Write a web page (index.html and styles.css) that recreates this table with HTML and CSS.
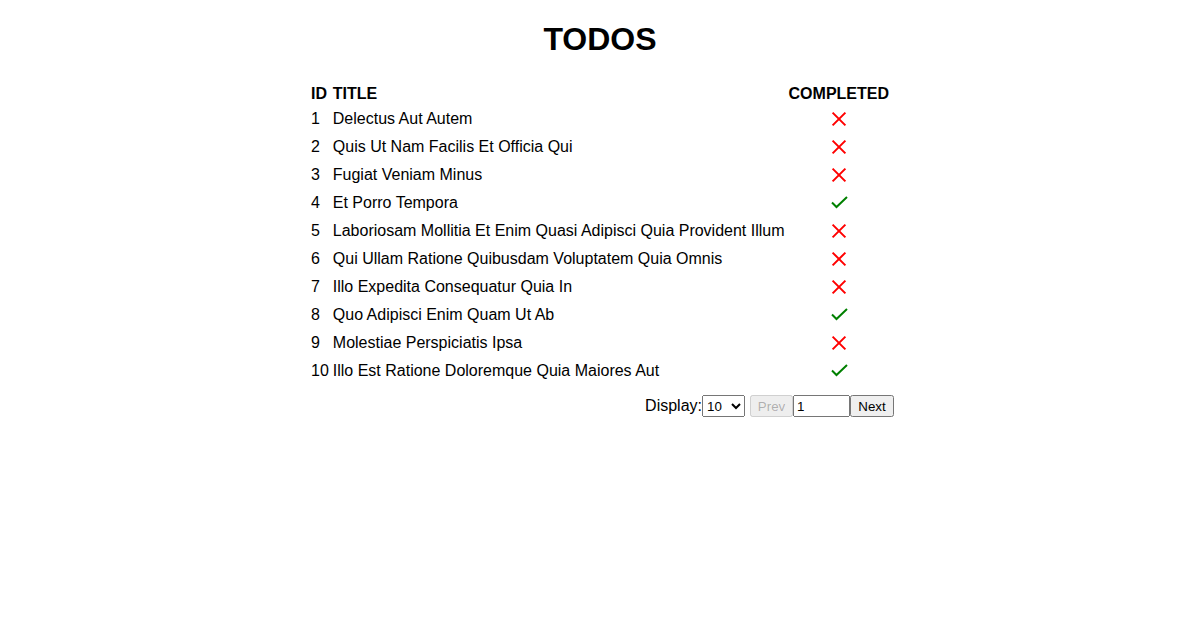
FILE: index.html
```html
<!DOCTYPE html>
<html>
<head>
<meta charset="utf-8">
<link rel="stylesheet" href="styles.css">
</head>
<body>
<div class="app">
  <h1 class="title">TODOS</h1>
  <div class="wrap">
    <table class="todos">
      <thead>
        <tr><th class="id">ID</th><th class="name">TITLE</th><th class="done">COMPLETED</th></tr>
      </thead>
      <tbody>
        <tr><td>1</td><td>Delectus Aut Autem</td><td class="done"><svg class="ic no" viewBox="0 0 24 24"><path d="M5.6 5.6L18.4 18.4M18.4 5.6L5.6 18.4"/></svg></td></tr>
        <tr><td>2</td><td>Quis Ut Nam Facilis Et Officia Qui</td><td class="done"><svg class="ic no" viewBox="0 0 24 24"><path d="M5.6 5.6L18.4 18.4M18.4 5.6L5.6 18.4"/></svg></td></tr>
        <tr><td>3</td><td>Fugiat Veniam Minus</td><td class="done"><svg class="ic no" viewBox="0 0 24 24"><path d="M5.6 5.6L18.4 18.4M18.4 5.6L5.6 18.4"/></svg></td></tr>
        <tr><td>4</td><td>Et Porro Tempora</td><td class="done"><svg class="ic yes" viewBox="0 0 24 24"><path d="M5 11.5L9.5 16L20 6"/></svg></td></tr>
        <tr><td>5</td><td>Laboriosam Mollitia Et Enim Quasi Adipisci Quia Provident Illum</td><td class="done"><svg class="ic no" viewBox="0 0 24 24"><path d="M5.6 5.6L18.4 18.4M18.4 5.6L5.6 18.4"/></svg></td></tr>
        <tr><td>6</td><td>Qui Ullam Ratione Quibusdam Voluptatem Quia Omnis</td><td class="done"><svg class="ic no" viewBox="0 0 24 24"><path d="M5.6 5.6L18.4 18.4M18.4 5.6L5.6 18.4"/></svg></td></tr>
        <tr><td>7</td><td>Illo Expedita Consequatur Quia In</td><td class="done"><svg class="ic no" viewBox="0 0 24 24"><path d="M5.6 5.6L18.4 18.4M18.4 5.6L5.6 18.4"/></svg></td></tr>
        <tr><td>8</td><td>Quo Adipisci Enim Quam Ut Ab</td><td class="done"><svg class="ic yes" viewBox="0 0 24 24"><path d="M5 11.5L9.5 16L20 6"/></svg></td></tr>
        <tr><td>9</td><td>Molestiae Perspiciatis Ipsa</td><td class="done"><svg class="ic no" viewBox="0 0 24 24"><path d="M5.6 5.6L18.4 18.4M18.4 5.6L5.6 18.4"/></svg></td></tr>
        <tr><td>10</td><td>Illo Est Ratione Doloremque Quia Maiores Aut</td><td class="done"><svg class="ic yes" viewBox="0 0 24 24"><path d="M5 11.5L9.5 16L20 6"/></svg></td></tr>
      </tbody>
    </table>
    <div class="pager">
      <label class="disp">Display:<select class="sel"><option>10</option><option>20</option></select></label>
      <button class="btn prev" disabled>Prev</button><input class="page" type="text" value="1"><button class="btn next">Next</button>
    </div>
  </div>
</div>
</body>
</html>
```

FILE: styles.css
```css
body {
  margin: 0;
  font-family: "Liberation Sans", Arial, sans-serif;
  font-size: 16px;
  color: #000;
  background: #fff;
}
.app {
  padding: 0 8px;
}
.title {
  text-align: center;
  font-size: 32px;
  font-weight: bold;
  margin: 21px 0 24px;
}
.wrap {
  width: 588px;
  margin: 0 auto;
}
.todos {
  border-collapse: separate;
  border-spacing: 2px;
  margin: 0 auto;
}
.todos th {
  text-align: left;
  padding: 1px;
  font-weight: bold;
}
.todos th.done {
  text-align: center;
}
.todos td {
  padding: 1px;
  vertical-align: middle;
  height: 24px;
}
.todos td.done {
  text-align: center;
}
.ic {
  width: 24px;
  height: 24px;
  display: block;
  margin: 0 auto;
  fill: none;
  stroke-width: 2;
}
.ic.no { stroke: #ff0000; }
.ic.yes { stroke: #008000; }
.pager {
  display: flex;
  justify-content: flex-end;
  align-items: center;
  margin-top: 9px;
}
.disp {
  display: flex;
  align-items: center;
}
.sel {
  font-family: "Liberation Sans", Arial, sans-serif;
  font-size: 13.33px;
  width: 43px;
  height: 22px;
  margin: 0 5px 0 0;
  box-sizing: border-box;
}
.btn {
  font-family: "Liberation Sans", Arial, sans-serif;
  font-size: 13.33px;
  height: 22px;
  width: 43px;
  padding: 1px 4px;
  margin: 0;
  box-sizing: border-box;
}
.btn.next {
  width: 44px;
}
.page {
  font-family: "Liberation Sans", Arial, sans-serif;
  font-size: 13.33px;
  width: 57px;
  height: 22px;
  box-sizing: border-box;
  padding: 1px 2px;
  margin: 0;
}
```
